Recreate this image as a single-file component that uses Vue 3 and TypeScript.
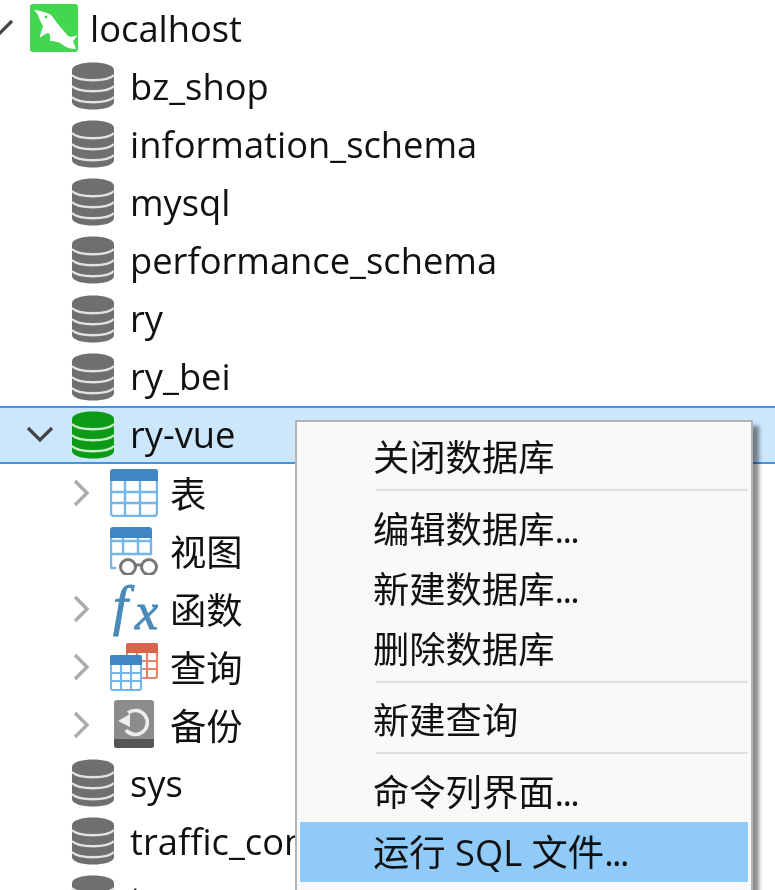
<template>
  <div class="screen">
    <div class="tree">
      <div
        v-for="node in nodes"
        :key="node.label"
        class="row"
        :class="{ selected: node.selected }"
      >
        <span class="chevron" :style="{ marginLeft: `${node.level * 40 - 15}px` }">
          <svg v-if="node.arrow === 'down'" width="30" height="20" viewBox="0 0 30 20">
            <path d="M3 3 L15 15 L27 3" fill="none" stroke="#444" stroke-width="3.2" />
          </svg>
          <svg v-else-if="node.arrow === 'right'" width="30" height="30" viewBox="0 0 30 30">
            <path d="M10 3 L22 15 L10 27" fill="none" stroke="#ababab" stroke-width="3.4" />
          </svg>
        </span>

        <span class="icon">
          <svg v-if="node.icon === 'server'" width="48" height="50" viewBox="0 0 48 50">
            <rect y="1" width="48" height="48" rx="3" fill="#43d64f" />
            <path
              fill="#fff"
              d="M4 7 C9 7 13 9 17 10 C21 11 24 15 27 20 C31 25 35 29 38 33 C41 34 44 34 47 32 C46 35 44 37 43 38 C44 41 45 43 46 46 C42 46 37 45 33 42 C29 39 25 38 20 38 C20 34 20 32 19 30 C16 30 13 32 10 35 C10 31 12 27 13 23 C11 19 9 16 8 12 C7 10 5 8 4 7 Z"
            />
            <circle cx="16" cy="14" r="1.4" fill="#43d64f" />
          </svg>

          <svg v-else-if="node.icon === 'db'" width="48" height="48" viewBox="0 0 48 48">
            <path
              :fill="node.selected ? '#0c9a17' : '#6f6f6f'"
              d="M2 8 C2 -2 44 -2 44 8 V40 C44 50 2 50 2 40 Z"
            />
            <path
              fill="none"
              :stroke="node.selected ? '#c8ecc8' : '#e2e2e2'"
              stroke-width="2.4"
              d="M2 13 C8 20 38 20 44 13 M2 24 C8 31 38 31 44 24 M2 35 C8 42 38 42 44 35"
            />
          </svg>

          <svg v-else-if="node.icon === 'table'" width="48" height="48" viewBox="0 0 48 48">
            <rect x="1" y="1" width="46" height="46" rx="3" fill="#fff" stroke="#74b5ea" stroke-width="2.4" />
            <path d="M0 12 V3 Q0 0 3 0 H45 Q48 0 48 3 V12 Z" fill="#3f87c4" />
            <path d="M15 12 V47 M30 12 V47 M1 23 H47 M1 34 H47" stroke="#74b5ea" stroke-width="2.4" />
          </svg>

          <svg v-else-if="node.icon === 'view'" width="48" height="48" viewBox="0 0 48 48">
            <path d="M1 11 V40 Q1 41 2 41 H6 M41 11 V28" fill="none" stroke="#74b5ea" stroke-width="2.4" />
            <path d="M0 11 V3 Q0 0 3 0 H39 Q42 0 42 3 V11 Z" fill="#3f87c4" />
            <path d="M13 11 V28 M28 11 V28 M1 14 H41 M1 27 H41" stroke="#74b5ea" stroke-width="2.4" />
            <circle cx="18" cy="40" r="7.5" fill="#fff" stroke="#777" stroke-width="3" />
            <circle cx="39" cy="40" r="7.5" fill="#fff" stroke="#777" stroke-width="3" />
            <path d="M25 38 H32" stroke="#777" stroke-width="3" />
          </svg>

          <svg v-else-if="node.icon === 'fx'" class="fx-icon" width="48" height="48" viewBox="0 0 48 48">
            <text class="fx"><tspan class="fx-f" x="3" y="39">f</tspan><tspan x="25" y="44">x</tspan></text>
          </svg>

          <svg v-else-if="node.icon === 'query'" width="48" height="48" viewBox="0 0 48 48">
            <rect x="17" y="1" width="30" height="34" rx="2" fill="#fff" stroke="#e8836a" stroke-width="2.2" />
            <path d="M16 10 V2 Q16 0 18 0 H46 Q48 0 48 2 V10 Z" fill="#d9644a" />
            <path d="M27 10 V35 M37 10 V35 M17 18 H47 M17 26 H47" stroke="#e8836a" stroke-width="2.2" />
            <rect x="1" y="13" width="30" height="34" rx="2" fill="#fff" stroke="#74b5ea" stroke-width="2.2" />
            <path d="M0 22 V14 Q0 12 2 12 H30 Q32 12 32 14 V22 Z" fill="#3f87c4" />
            <path d="M11 22 V47 M21 22 V47 M1 30 H31 M1 38 H31" stroke="#74b5ea" stroke-width="2.2" />
          </svg>

          <svg v-else-if="node.icon === 'backup'" width="48" height="50" viewBox="0 0 48 50">
            <rect x="4" y="0" width="40" height="48" rx="3" fill="#8c8c8c" />
            <path d="M4 39 H44 V45 Q44 48 41 48 H7 Q4 48 4 45 Z" fill="#555" />
            <path d="M18 13 A12 12 0 1 1 16 30" fill="none" stroke="#eee" stroke-width="3.6" />
            <path d="M8 21 L20 14 V27 Z" fill="#eee" />
          </svg>
        </span>

        <span class="label">{{ node.label }}</span>
      </div>
    </div>

    <div class="menu">
      <template v-for="item in menuItems" :key="item.label">
        <div v-if="item.divider" class="divider"></div>
        <div class="menu-item" :class="{ active: item.active }">
          {{ item.label }}<span v-if="item.more" class="dots">...</span>
        </div>
      </template>
    </div>
  </div>
</template>

<script setup lang="ts">
type IconName = 'server' | 'db' | 'table' | 'view' | 'fx' | 'query' | 'backup'

interface TreeNode {
  label: string
  level: number
  icon: IconName
  arrow?: 'down' | 'right'
  selected?: boolean
}

const nodes: TreeNode[] = [
  { label: 'localhost', level: 0, icon: 'server', arrow: 'down' },
  { label: 'bz_shop', level: 1, icon: 'db' },
  { label: 'information_schema', level: 1, icon: 'db' },
  { label: 'mysql', level: 1, icon: 'db' },
  { label: 'performance_schema', level: 1, icon: 'db' },
  { label: 'ry', level: 1, icon: 'db' },
  { label: 'ry_bei', level: 1, icon: 'db' },
  { label: 'ry-vue', level: 1, icon: 'db', arrow: 'down', selected: true },
  { label: '表', level: 2, icon: 'table', arrow: 'right' },
  { label: '视图', level: 2, icon: 'view' },
  { label: '函数', level: 2, icon: 'fx', arrow: 'right' },
  { label: '查询', level: 2, icon: 'query', arrow: 'right' },
  { label: '备份', level: 2, icon: 'backup', arrow: 'right' },
  { label: 'sys', level: 1, icon: 'db' },
  { label: 'traffic_control', level: 1, icon: 'db' },
  { label: 'temp', level: 1, icon: 'db' }
]

const menuItems = [
  { label: '关闭数据库' },
  { label: '编辑数据库', more: true, divider: true },
  { label: '新建数据库', more: true },
  { label: '删除数据库' },
  { label: '新建查询', divider: true },
  { label: '命令列界面', more: true, divider: true },
  { label: '运行 SQL 文件', more: true, active: true }
]
</script>

<style>
html,
body {
  margin: 0;
  background: #fff;
}
</style>

<style scoped>
.screen {
  position: relative;
  width: 775px;
  height: 890px;
  overflow: hidden;
  background: #fff;
  color: #111;
  font-family: 'Open Sans', 'Noto Sans CJK SC', sans-serif;
  font-size: 36.3px;
  filter: blur(0.5px);
}

.tree {
  margin-top: -1px;
}

.row {
  display: flex;
  align-items: center;
  height: 58.1px;
  box-sizing: border-box;
  white-space: nowrap;
}

.row.selected {
  background: #cce6fc;
  border-top: 2px solid #3d97e6;
  border-bottom: 2px solid #3d97e6;
}

.chevron {
  flex: none;
  display: flex;
  align-items: center;
  justify-content: center;
  width: 30px;
  margin-right: 15px;
}

.icon {
  flex: none;
  display: flex;
  align-items: center;
  justify-content: center;
  width: 48px;
  margin-right: 12px;
}

.label {
  margin-bottom: 1px;
}

.fx-icon {
  overflow: visible;
}

.fx {
  font-family: 'Liberation Serif', serif;
  font-style: italic;
  font-size: 52px;
  fill: #4a8ab8;
  stroke: #4a8ab8;
  stroke-width: 1px;
}

.fx-f {
  font-size: 54px;
}

.menu {
  position: absolute;
  top: 420px;
  left: 295px;
  width: 448px;
  height: 520px;
  padding: 5px 3px;
  box-sizing: content-box;
  background: #f9f9f9;
  border: 2px solid #b4b4b4;
  box-shadow: 6px 6px 4px rgba(0, 0, 0, 0.45);
}

.menu-item {
  height: 60px;
  line-height: 60px;
  padding-left: 73px;
  white-space: nowrap;
}

.menu-item.active {
  background: #90caf9;
}

.dots {
  letter-spacing: -1.6px;
}

.divider {
  height: 2px;
  margin: 2px 0 7.5px 76px;
  background: #e0e0e0;
}
</style>
